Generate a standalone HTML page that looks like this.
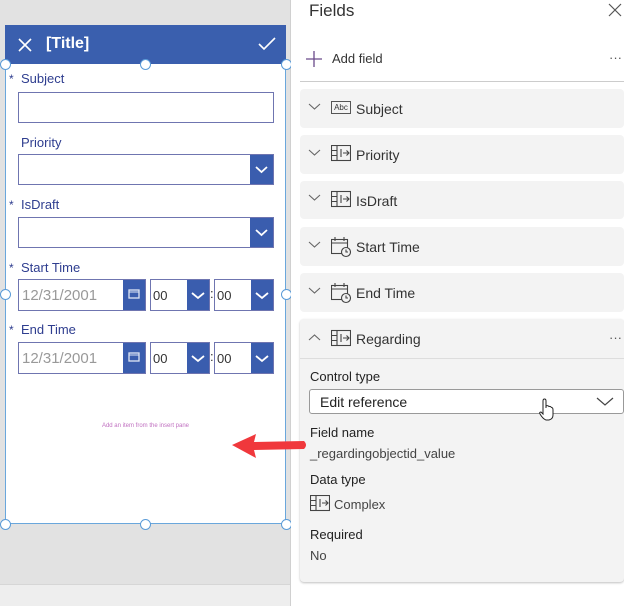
<!DOCTYPE html>
<html><head><style>
*{box-sizing:border-box;margin:0;padding:0}
body{width:624px;height:606px;overflow:hidden;font-family:"Liberation Sans",sans-serif;background:#fff;position:relative}
.a{position:absolute}
.lbl{position:absolute;font-size:13px;color:#2e3d8f}
.star{position:absolute;font-size:12px;color:#2e3d8f}
.inp{position:absolute;border:1px solid #6f75b0;background:#fff}
.btn{position:absolute;background:#3a5dae;top:0;bottom:0;right:0}
.card{position:absolute;left:300px;width:324px;background:#f3f3f3;border-radius:4px}
.ct{position:absolute;left:356px;font-size:14px;color:#333}
.h{position:absolute;width:11px;height:11px;border-radius:50%;border:1.5px solid #5a9bd8;background:#fff}
.pt{font-size:13px;color:#222;position:absolute;left:310px}
.pv{font-size:13px;color:#444;position:absolute;left:310px}
</style></head><body>
<div class="a" style="left:0;top:0;width:290px;height:584px;background:#e2e2e2"></div>
<div class="a" style="left:0;top:584px;width:290px;height:22px;background:#eeeeee;border-top:1px solid #d6d6d6"></div>
<div class="a" style="left:290px;top:0;width:1px;height:606px;background:#d0d0d0"></div>
<!-- form -->
<div class="a" style="left:5px;top:25px;width:281px;height:499px;background:#fff;border:1.5px solid #6aa7dc"></div>
<div class="a" style="left:5px;top:25px;width:281px;height:39px;background:#3a5fae"></div>
<svg class="a" style="left:17px;top:37px" width="16" height="16"><path d="M2 2L14 14M14 2L2 14" stroke="#fff" stroke-width="1.6"/></svg>
<div class="a" style="left:46px;top:35px;font-size:16px;color:#fff;font-weight:bold">[Title]</div>
<svg class="a" style="left:258px;top:37px" width="18" height="14"><path d="M1 7L6 12L17 1" stroke="#fff" stroke-width="1.6" fill="none"/></svg>
<div class="star" style="left:9px;top:72px">*</div><div class="lbl" style="left:21px;top:71px">Subject</div>
<div class="inp" style="left:18px;top:92px;width:256px;height:31px"></div>
<div class="lbl" style="left:21px;top:135px">Priority</div>
<div class="inp" style="left:18px;top:154px;width:256px;height:31px"><div class="btn" style="width:23px"><svg width="23" height="29"><path d="M6 12L11.5 17L17 12" stroke="#fff" stroke-width="1.8" fill="none"/></svg></div></div>
<div class="star" style="left:9px;top:198px">*</div><div class="lbl" style="left:21px;top:197px">IsDraft</div>
<div class="inp" style="left:18px;top:217px;width:256px;height:31px"><div class="btn" style="width:23px"><svg width="23" height="29"><path d="M6 12L11.5 17L17 12" stroke="#fff" stroke-width="1.8" fill="none"/></svg></div></div>
<div class="star" style="left:9px;top:261px">*</div><div class="lbl" style="left:21px;top:260px">Start Time</div>
<div class="star" style="left:9px;top:323px">*</div><div class="lbl" style="left:21px;top:322px">End Time</div>
<div class="a" style="left:18px;top:279px;width:128px;height:32px;border:1px solid #6f75b0"><span class="a" style="left:3px;top:7px;font-size:15px;color:#999">12/31/2001</span><div class="btn" style="width:22px"><svg width="22" height="30"><rect x="6" y="10" width="10" height="8" fill="none" stroke="#dfe6f5" stroke-width="1.3"/><line x1="6" y1="12" x2="16" y2="12" stroke="#dfe6f5"/></svg></div></div>
<div class="a" style="left:150px;top:279px;width:60px;height:32px;border:1px solid #6f75b0"><span class="a" style="left:2px;top:8px;font-size:13px;color:#333">00</span><div class="btn" style="width:22px"><svg width="22" height="30"><path d="M5 13L11 18L17 13" stroke="#fff" stroke-width="1.8" fill="none"/></svg></div></div>
<div class="a" style="left:210px;top:286px;font-size:13px;color:#333">:</div>
<div class="a" style="left:214px;top:279px;width:60px;height:32px;border:1px solid #6f75b0"><span class="a" style="left:2px;top:8px;font-size:13px;color:#333">00</span><div class="btn" style="width:22px"><svg width="22" height="30"><path d="M5 13L11 18L17 13" stroke="#fff" stroke-width="1.8" fill="none"/></svg></div></div>
<div class="a" style="left:18px;top:342px;width:128px;height:32px;border:1px solid #6f75b0"><span class="a" style="left:3px;top:7px;font-size:15px;color:#999">12/31/2001</span><div class="btn" style="width:22px"><svg width="22" height="30"><rect x="6" y="10" width="10" height="8" fill="none" stroke="#dfe6f5" stroke-width="1.3"/><line x1="6" y1="12" x2="16" y2="12" stroke="#dfe6f5"/></svg></div></div>
<div class="a" style="left:150px;top:342px;width:60px;height:32px;border:1px solid #6f75b0"><span class="a" style="left:2px;top:8px;font-size:13px;color:#333">00</span><div class="btn" style="width:22px"><svg width="22" height="30"><path d="M5 13L11 18L17 13" stroke="#fff" stroke-width="1.8" fill="none"/></svg></div></div>
<div class="a" style="left:210px;top:349px;font-size:13px;color:#333">:</div>
<div class="a" style="left:214px;top:342px;width:60px;height:32px;border:1px solid #6f75b0"><span class="a" style="left:2px;top:8px;font-size:13px;color:#333">00</span><div class="btn" style="width:22px"><svg width="22" height="30"><path d="M5 13L11 18L17 13" stroke="#fff" stroke-width="1.8" fill="none"/></svg></div></div>
<div class="a" style="left:5px;top:423px;width:281px;text-align:center;font-size:6px;color:#c070c0">Add an item from the insert pane</div>
<div class="h" style="left:0;top:59px"></div><div class="h" style="left:140px;top:59px"></div><div class="h" style="left:281px;top:59px"></div>
<div class="h" style="left:0;top:289px"></div><div class="h" style="left:281px;top:289px"></div>
<div class="h" style="left:0;top:519px"></div><div class="h" style="left:140px;top:519px"></div><div class="h" style="left:281px;top:519px"></div>
<!-- right pane -->
<div class="a" style="left:291px;top:0;width:333px;height:606px;background:#fff"></div>
<div class="a" style="left:309px;top:1px;font-size:17px;color:#333">Fields</div>
<svg class="a" style="left:608px;top:3px" width="14" height="14"><path d="M1 1L13 13M13 1L1 13" stroke="#555" stroke-width="1.2"/></svg>
<svg class="a" style="left:305px;top:50px" width="18" height="18"><path d="M9 1V17M1 9H17" stroke="#6a4a8a" stroke-width="1.3"/></svg>
<div class="a" style="left:332px;top:51px;font-size:13px;color:#333">Add field</div>
<div class="a" style="left:609px;top:50px;font-size:13px;color:#555">···</div>
<div class="a" style="left:300px;top:81px;width:324px;height:1px;background:#ccc"></div>
<div class="card" style="top:89px;height:39px"></div>
<div class="card" style="top:135px;height:39px"></div>
<div class="card" style="top:181px;height:38px"></div>
<div class="card" style="top:227px;height:39px"></div>
<div class="card" style="top:273px;height:39px"></div>
<div class="card" style="top:319px;height:263px;box-shadow:0 1px 2px rgba(0,0,0,.25)"></div>
<div class="a" style="left:300px;top:358px;width:324px;height:1px;background:#ddd"></div>
<svg class="a" style="left:308px;top:102px" width="14" height="240">
<path d="M1 2L6.5 7L12 2M1 48L6.5 53L12 48M1 93L6.5 98L12 93M1 140L6.5 145L12 140M1 186L6.5 191L12 186" stroke="#666" stroke-width="1.1" fill="none"/>
<path d="M1 238L6.5 233L12 238" stroke="#666" stroke-width="1.1" fill="none"/></svg>
<div class="a" style="left:331px;top:101px;width:20px;height:13px;border:1px solid #555;font-size:8px;line-height:11px;text-align:center;color:#333">Abc</div>
<svg class="a" style="left:331px;top:145px" width="20" height="240" fill="none" stroke="#444" stroke-width="1.1">
<g id="t"><rect x="0.5" y="0.5" width="19" height="15"/><path d="M6 0.5V15.5M0.5 5.5H6M0.5 10.5H6M10 4V12M12 8H18M15.5 5.5L18 8L15.5 10.5"/></g>
<use href="#t" y="46"/><use href="#t" y="185"/>
<g transform="translate(0,92)"><rect x="0.5" y="2.5" width="16" height="14"/><path d="M0.5 6H16.5M4 0V4M13 0V4"/><circle cx="15" cy="15" r="4.5" fill="#f3f3f3"/><path d="M15 12.5V15H17"/></g>
<g transform="translate(0,138)"><rect x="0.5" y="2.5" width="16" height="14"/><path d="M0.5 6H16.5M4 0V4M13 0V4"/><circle cx="15" cy="15" r="4.5" fill="#f3f3f3"/><path d="M15 12.5V15H17"/></g>
</svg>
<div class="ct" style="top:101px">Subject</div>
<div class="ct" style="top:147px">Priority</div>
<div class="ct" style="top:193px">IsDraft</div>
<div class="ct" style="top:239px">Start Time</div>
<div class="ct" style="top:285px">End Time</div>
<div class="ct" style="top:331px">Regarding</div>
<div class="a" style="left:609px;top:330px;font-size:13px;color:#555">···</div>
<div class="pt" style="top:369px">Control type</div>
<div class="a" style="left:309px;top:389px;width:315px;height:25px;background:#fff;border:1px solid #999;border-radius:3px"><span class="a" style="left:10px;top:4px;font-size:14px;color:#222">Edit reference</span>
<svg class="a" style="left:286px;top:6px" width="18" height="12"><path d="M1 2L9 9L17 2" stroke="#444" stroke-width="1.2" fill="none"/></svg></div>
<svg class="a" style="left:538px;top:398px" width="16" height="24"><path d="M5 16V3Q5 1 6.5 1Q8 1 8 3V10L8 8Q9.5 7 11 8.5Q12.5 8 13.5 9.5Q15 9.5 15 12V17Q15 21 11 22H8Q5 21 2 16Q1 14 3 14Z" fill="#fff" stroke="#222" stroke-width="1"/></svg>
<div class="pt" style="top:425px">Field name</div>
<div class="pv" style="top:446px">_regardingobjectid_value</div>
<div class="pt" style="top:472px">Data type</div>
<svg class="a" style="left:310px;top:495px" width="20" height="17" fill="none" stroke="#444" stroke-width="1.1"><rect x="0.5" y="0.5" width="19" height="15"/><path d="M6 0.5V15.5M0.5 5.5H6M0.5 10.5H6M10 4V12M12 8H18M15.5 5.5L18 8L15.5 10.5"/></svg>
<div class="pv" style="top:497px;left:334px">Complex</div>
<div class="pt" style="top:527px">Required</div>
<div class="pv" style="top:548px">No</div>
<!-- arrow -->
<svg class="a" style="left:228px;top:430px" width="80" height="32"><path d="M4 15L28 4L26 12L76 11Q80 15 76 19L26 20L28 28Z" fill="#f0383c"/></svg>
</body></html>
